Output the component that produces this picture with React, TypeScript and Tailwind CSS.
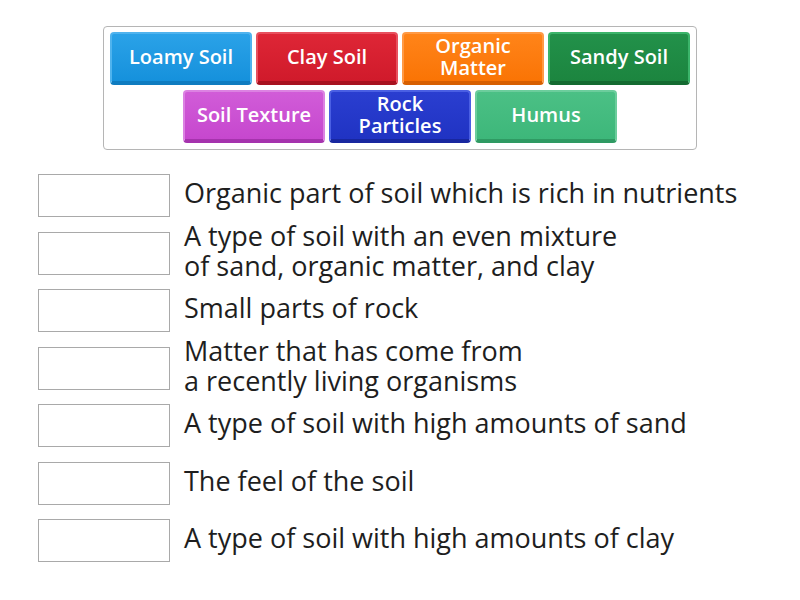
const tiles = [
  { label: "Loamy Soil", cls: "bg-gradient-to-b from-[#2aa2e8] to-[#1591dc] border-[#4fb3ee] border-b-[#0f7cc0]" },
  { label: "Clay Soil", cls: "bg-gradient-to-b from-[#de2636] to-[#d01a2b] border-[#e8505e] border-b-[#a8111f]" },
  { label: "Organic Matter", cls: "bg-gradient-to-b from-[#ff8418] to-[#fa7404] border-[#ff9a45] border-b-[#d75f00]" },
  { label: "Sandy Soil", cls: "bg-gradient-to-b from-[#22914a] to-[#1c853f] border-[#3bb46a] border-b-[#146b31]" },
  { label: "Soil Texture", cls: "bg-gradient-to-b from-[#d15cd8] to-[#c647ce] border-[#dc82e2] border-b-[#a533ad]" },
  { label: "Rock Particles", cls: "bg-gradient-to-b from-[#2a3ed0] to-[#2033c3] border-[#4a5fe3] border-b-[#18279f]" },
  { label: "Humus", cls: "bg-gradient-to-b from-[#4bc085] to-[#3db77a] border-[#6ccd9c] border-b-[#2f9a63]" },
];

const twoLine = ["Organic Matter", "Rock Particles"];

const rows = [
  ["Organic part of soil which is rich in nutrients"],
  ["A type of soil with an even mixture", "of sand, organic matter, and clay"],
  ["Small parts of rock"],
  ["Matter that has come from", "a recently living organisms"],
  ["A type of soil with high amounts of sand"],
  ["The feel of the soil"],
  ["A type of soil with high amounts of clay"],
];

export default function App() {
  return (
    <div className="w-[800px] h-[600px] bg-white font-['Open_Sans',sans-serif] overflow-hidden">
      <div className="mx-auto mt-[26px] w-[594px] h-[124px] border border-[#b5b5b5] rounded-[4px] px-[6px] pt-[5px] flex flex-wrap justify-center content-start gap-x-[4px] gap-y-[5px]">
        {tiles.map((t) => (
          <div
            key={t.label}
            className={`w-[142px] h-[53px] rounded-[4px] border-[2px] border-b-[4px] flex items-center justify-center text-center text-white font-semibold text-[20px] leading-[22px] pb-[1px] ${t.cls}`}
          >
            {twoLine.includes(t.label) ? (
              <span>
                {t.label.split(" ")[0]}
                <br />
                {t.label.split(" ")[1]}
              </span>
            ) : (
              t.label
            )}
          </div>
        ))}
      </div>

      <div className="mt-[24px] ml-[38px] flex flex-col gap-[14.5px]">
        {rows.map((lines, i) => (
          <div key={i} className="flex items-center gap-[14px] h-[43px]">
            <div className="w-[132px] h-[43px] border border-[#a9a9a9] bg-white shrink-0" />
            <div className="text-[27px] leading-[30px] text-[#1e1e1e] whitespace-nowrap mb-[5px]">
              {lines.map((l) => (
                <div key={l}>{l}</div>
              ))}
            </div>
          </div>
        ))}
      </div>
    </div>
  );
}
